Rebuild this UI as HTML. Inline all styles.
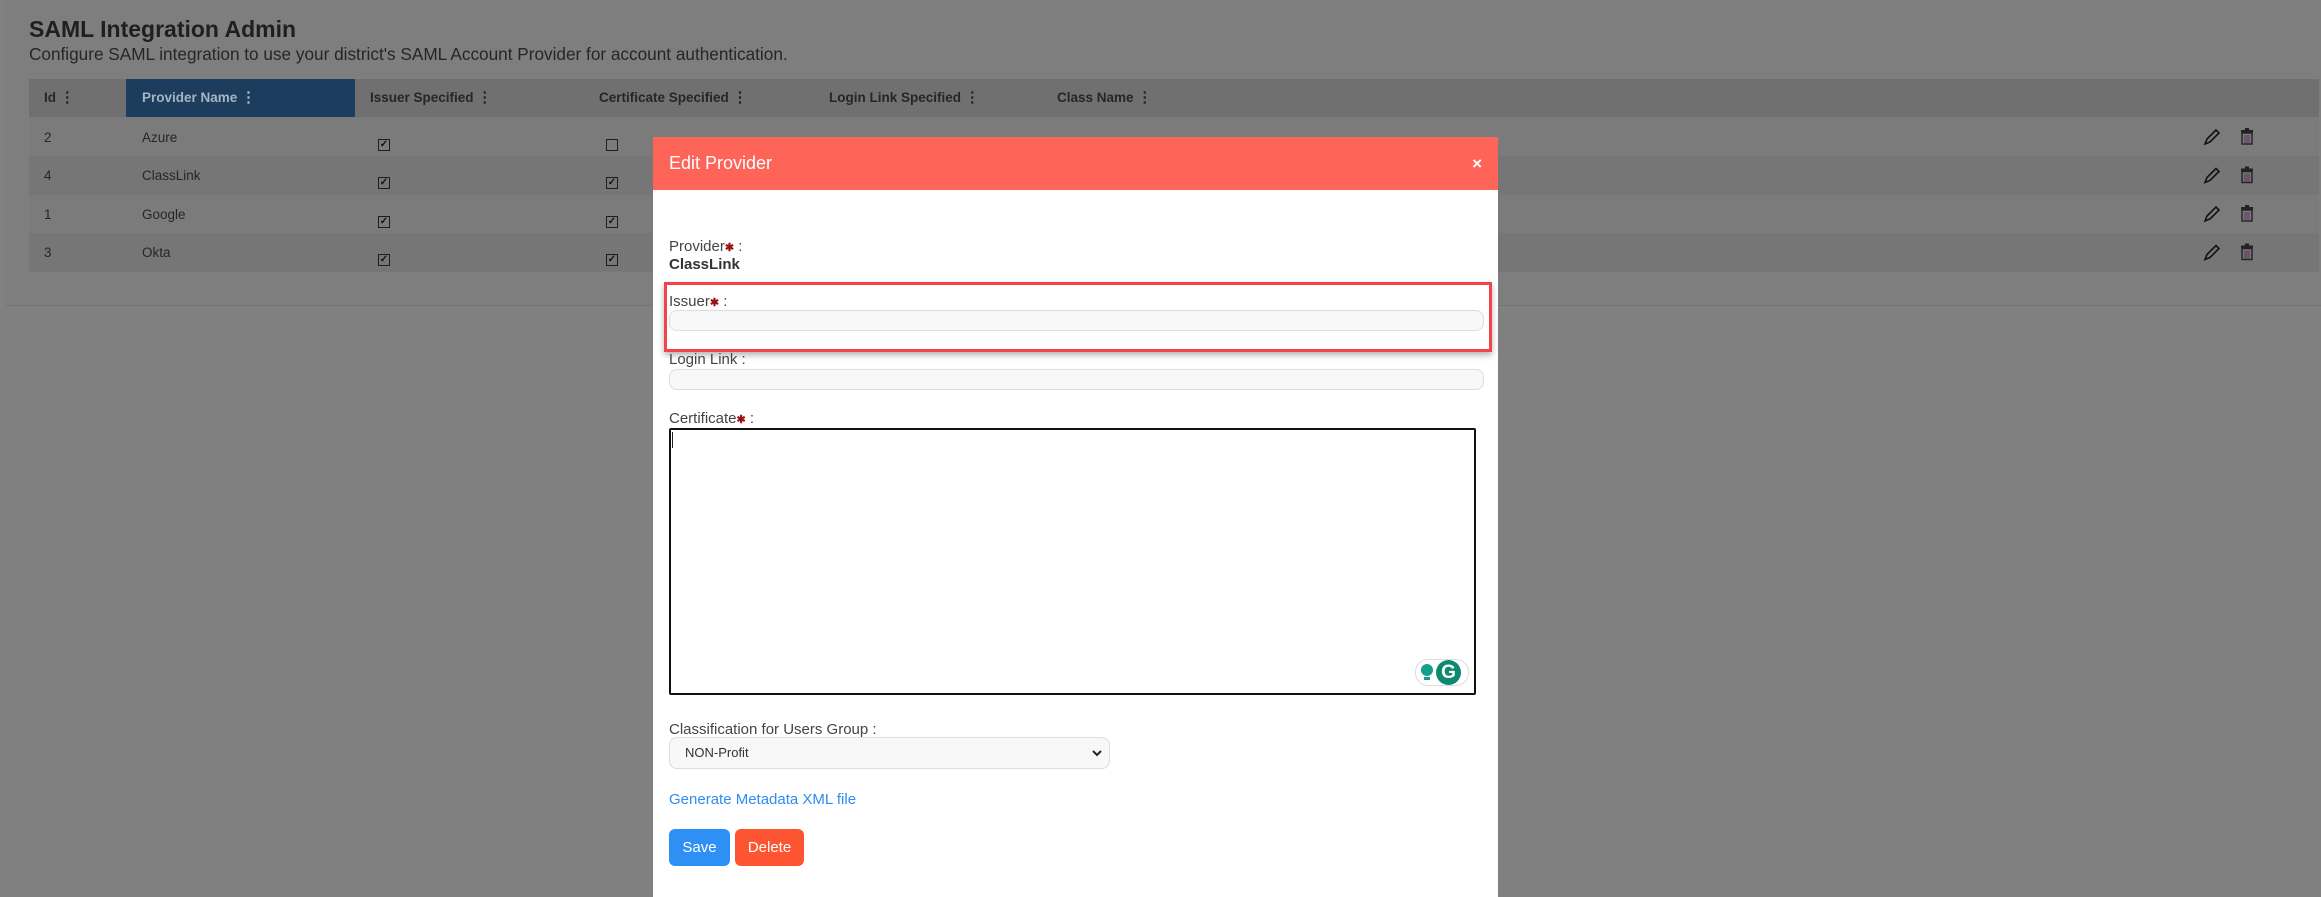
<!DOCTYPE html>
<html><head><meta charset="utf-8"><style>
*{box-sizing:border-box;margin:0;padding:0}
body{width:2321px;height:893px;background:#808080;font-family:"Liberation Sans",Arial,sans-serif;position:relative;overflow:hidden}
.abs{position:absolute}
.panel{left:6px;top:0;width:2315px;height:306px;background:#7e7e7e;border-bottom:1px solid #747474}
h1{position:absolute;left:29px;top:16px;font-size:23px;font-weight:bold;color:#1f1f1f}
.sub{left:29px;top:44px;font-size:17.2px;color:#262626}
.thead{left:29px;top:79px;width:2290px;height:38px;background:#707070}
.th{top:79px;height:38px;line-height:38px;font-size:13.5px;font-weight:bold;color:#262626}
.th i{font-style:normal;font-weight:bold;font-size:15px}
.row{left:29px;width:2290px;height:38.5px}
.td{font-size:13.5px;color:#262626}
.cb{width:12px;height:12px;border:1.5px solid #1e1e1e;font-size:10px;line-height:9px;text-align:center;color:#111;font-weight:bold}
.modal{left:653px;top:137px;width:845px;height:760px;background:#fff}
.mh{left:0;top:0;width:845px;height:53px;background:#ff6459;color:#fff;font-size:18px;line-height:53px;padding-left:16px}
.lbl{font-size:15px;color:#444}
.lbl b{color:#9b1111;font-size:11px}
.inp{height:21px;border:1px solid #ddd;border-radius:8px;background:#f8f8f8}
</style></head><body>
<div class="abs panel"></div>
<h1>SAML Integration Admin</h1>
<div class="abs sub">Configure SAML integration to use your district's SAML Account Provider for account authentication.</div>
<div class="abs thead"></div>
<div class="abs" style="left:126px;top:79px;width:229px;height:38px;background:#1c3d5e"></div>
<div class="abs th" style="left:44px">Id <i>⋮</i></div>
<div class="abs th" style="left:142px;color:#a7b4c2">Provider Name <i>⋮</i></div>
<div class="abs th" style="left:370px">Issuer Specified <i>⋮</i></div>
<div class="abs th" style="left:599px">Certificate Specified <i>⋮</i></div>
<div class="abs th" style="left:829px">Login Link Specified <i>⋮</i></div>
<div class="abs th" style="left:1057px">Class Name <i>⋮</i></div>

<div class="abs row" style="top:117px;background:#7b7b7b"></div>
<div class="abs row" style="top:156px;background:#767676"></div>
<div class="abs row" style="top:195px;background:#7b7b7b"></div>
<div class="abs row" style="top:233px;background:#767676"></div>

<div class="abs td" style="left:44px;top:130px">2</div><div class="abs td" style="left:142px;top:130px">Azure</div>
<div class="abs td" style="left:44px;top:168px">4</div><div class="abs td" style="left:142px;top:168px">ClassLink</div>
<div class="abs td" style="left:44px;top:207px">1</div><div class="abs td" style="left:142px;top:207px">Google</div>
<div class="abs td" style="left:44px;top:245px">3</div><div class="abs td" style="left:142px;top:245px">Okta</div>

<div class="abs cb" style="left:378px;top:139px">✓</div><div class="abs cb" style="left:606px;top:139px"></div>
<div class="abs cb" style="left:378px;top:177px">✓</div><div class="abs cb" style="left:606px;top:177px">✓</div>
<div class="abs cb" style="left:378px;top:216px">✓</div><div class="abs cb" style="left:606px;top:216px">✓</div>
<div class="abs cb" style="left:378px;top:254px">✓</div><div class="abs cb" style="left:606px;top:254px">✓</div>

<svg class="abs" style="left:0;top:0" width="2321" height="300">
<g id="ic">
<path d="M2205 144 l2-5 l9-9 l3 3 l-9 9 z" fill="none" stroke="#111" stroke-width="1.6"/>
<rect x="2241" y="130" width="12" height="2.5" fill="#222"/><rect x="2245" y="128" width="4" height="2" fill="#222"/>
<rect x="2242" y="133" width="10" height="11" fill="none" stroke="#222" stroke-width="1.4"/>
<path d="M2245 135v8M2247 135v8M2249 135v8" stroke="#5a2a5a" stroke-width="0.9"/>
</g>
<use href="#ic" y="38.5"/><use href="#ic" y="77"/><use href="#ic" y="115.5"/>
</svg>

<div class="abs modal">
  <div class="abs mh">Edit Provider<span class="abs" style="right:16px;top:0;font-size:17px;font-weight:bold">×</span></div>
  <div class="abs lbl" style="left:16px;top:101px">Provider<b>✱</b> :</div>
  <div class="abs" style="left:16px;top:119px;font-size:15px;font-weight:bold;color:#333">ClassLink</div>
  <div class="abs" style="left:11px;top:145px;width:828px;height:70px;border:3px solid #f2434b;box-shadow:0 3px 6px rgba(0,0,0,.3)"></div>
  <div class="abs lbl" style="left:16px;top:156px">Issuer<b>✱</b> :</div>
  <div class="abs inp" style="left:16px;top:173px;width:815px"></div>
  <div class="abs lbl" style="left:16px;top:214px">Login Link :</div>
  <div class="abs inp" style="left:16px;top:232px;width:815px"></div>
  <div class="abs lbl" style="left:16px;top:273px">Certificate<b>✱</b> :</div>
  <div class="abs" style="left:16px;top:291px;width:807px;height:267px;border:2px solid #111;border-radius:2px"></div>
  <div class="abs" style="left:19px;top:295px;width:1px;height:16px;background:#222"></div>
  <div class="abs" style="left:762px;top:522px;width:54px;height:27px;border:1px solid #ddd;border-radius:13px;background:#fff"></div>
  <div class="abs" style="left:768px;top:527px;width:12px;height:12px;border-radius:50%;background:#12a08a"></div>
  <div class="abs" style="left:771px;top:540px;width:6px;height:3px;background:#12a08a"></div>
  <div class="abs" style="left:783px;top:523px;width:25px;height:25px;border-radius:50%;background:#0d8a6e;color:#fff;font-weight:bold;font-size:19px;text-align:center;line-height:25px">G</div>
  <div class="abs lbl" style="left:16px;top:584px">Classification for Users Group :</div>
  <div class="abs" style="left:16px;top:600px;width:441px;height:32px;border:1px solid #ddd;border-radius:8px;background:#f8f8f8;font-size:13px;color:#333;line-height:30px;padding-left:15px">NON-Profit<svg class="abs" style="right:7px;top:11px" width="10" height="8"><path d="M1 2l4 4 4-4" fill="none" stroke="#222" stroke-width="2"/></svg></div>
  <div class="abs" style="left:16px;top:654px;font-size:15px;color:#2f8cf0">Generate Metadata XML file</div>
  <div class="abs" style="left:16px;top:692px;width:61px;height:37px;background:#2e8ff5;border-radius:6px;color:#fff;font-size:15px;text-align:center;line-height:37px">Save</div>
  <div class="abs" style="left:82px;top:692px;width:69px;height:37px;background:#fd5531;border-radius:6px;color:#fff;font-size:15px;text-align:center;line-height:37px">Delete</div>
</div>
</body></html>
